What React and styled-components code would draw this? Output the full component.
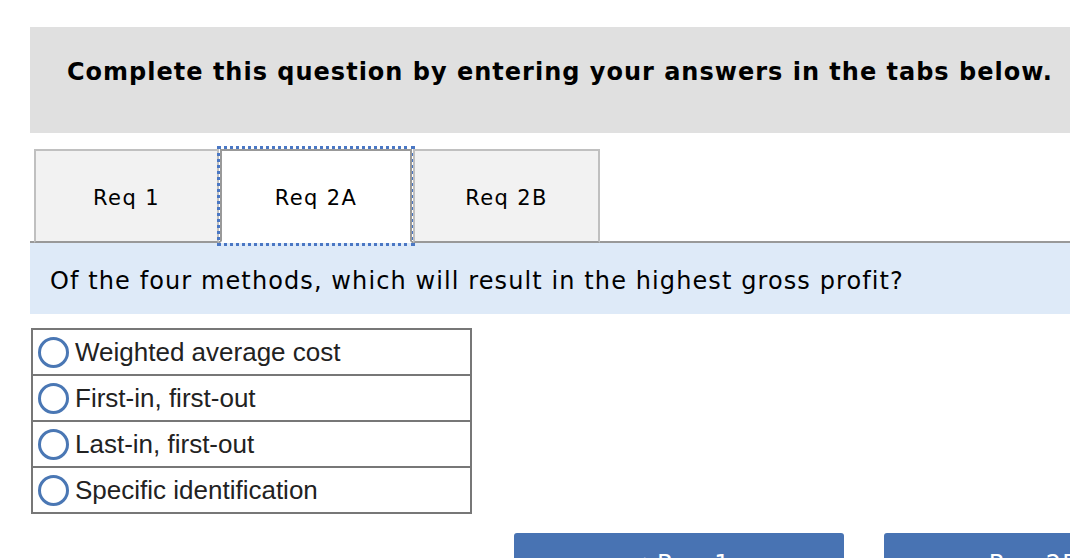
import React, { useState } from 'react';
import styled, { createGlobalStyle } from 'styled-components';

const tabs = ['Req 1', 'Req 2A', 'Req 2B'];
const options = [
  'Weighted average cost',
  'First-in, first-out',
  'Last-in, first-out',
  'Specific identification',
];

const GlobalStyle = createGlobalStyle`
  body { margin: 0; background: #fff; overflow: hidden; }
  * { box-sizing: border-box; }
`;

const Page = styled.div`
  padding: 27px 0 0 30px;
  width: 1070px;
  height: 558px;
  overflow: hidden;
  font-family: "DejaVu Sans", Verdana, sans-serif;
  color: #000;
`;

const Banner = styled.div`
  display: flex;
  align-items: center;
  height: 106px;
  padding: 0 0 16px 37px;
  background: #e0e0e0;
  font-size: 24px;
  font-weight: bold;
  letter-spacing: 1px;
  white-space: nowrap;
`;

const TabBar = styled.div`
  display: flex;
  align-items: flex-end;
  margin-top: 16px;
  padding-left: 4px;
  border-bottom: 2px solid #999;
`;

const Tab = styled.button`
  display: flex;
  align-items: center;
  justify-content: center;
  width: ${p => p.$w}px;
  height: 94px;
  margin: 0 ${p => (p.$active ? '1px' : '0')};
  margin-bottom: -2px;
  padding: 4px 0 0;
  border: 2px solid ${p => (p.$active ? '#999' : '#c0c0c0')};
  border-bottom: ${p => (p.$active ? '2px solid #fff' : '2px solid #999')};
  background: ${p => (p.$active ? '#fff' : '#f2f2f2')};
  outline: ${p => (p.$active ? '3px dotted #4a77c4' : 'none')};
  outline-offset: 0;
  font-family: inherit;
  font-size: 21px;
  letter-spacing: 1.4px;
  color: #000;
  cursor: pointer;
`;

const Question = styled.div`
  display: flex;
  align-items: center;
  height: 71px;
  padding: 5px 0 0 20px;
  background: #deeaf8;
  font-size: 24px;
  letter-spacing: 1.1px;
  white-space: nowrap;
`;

const Options = styled.div`
  display: flex;
  flex-direction: column;
  width: 441px;
  margin: 14px 0 0 1px;
  border: 2px solid #777;
`;

const Option = styled.label`
  display: flex;
  align-items: center;
  gap: 6px;
  box-sizing: content-box;
  height: 44px;
  padding-left: 5px;
  border-top: ${p => (p.$first ? 'none' : '2px solid #777')};
  font-family: "Liberation Sans", Arial, sans-serif;
  font-size: 26px;
  color: #222;
  cursor: pointer;
`;

const Radio = styled.span`
  flex: none;
  width: 31px;
  height: 31px;
  border-radius: 50%;
  border: 3px solid ${p => (p.$checked ? '#2c5aa0' : '#4a77b4')};
  background: ${p => (p.$checked ? 'radial-gradient(circle, #4a77b4 0 45%, #fff 50%)' : '#fff')};
`;

const Nav = styled.div`
  display: flex;
  gap: 40px;
  margin: 19px 0 0 484px;
`;

const NavButton = styled.button`
  flex: none;
  width: 330px;
  height: 50px;
  padding: 12px 0 0;
  border: none;
  border-radius: 3px;
  background: #4873b3;
  color: #fff;
  font-family: "DejaVu Sans", Verdana, sans-serif;
  font-size: 24px;
  letter-spacing: 1px;
  text-align: center;
`;

const widths = [185, 192, 187];

export default function App() {
  const [active, setActive] = useState(1);
  const [picked, setPicked] = useState(null);

  return (
    <Page>
      <GlobalStyle />
      <Banner>Complete this question by entering your answers in the tabs below.</Banner>
      <TabBar>
        {tabs.map((t, i) => (
          <Tab key={t} $w={widths[i]} $active={i === active} onClick={() => setActive(i)}>
            {t}
          </Tab>
        ))}
      </TabBar>
      <Question>Of the four methods, which will result in the highest gross profit?</Question>
      <Options>
        {options.map((o, i) => (
          <Option key={o} $first={i === 0} onClick={() => setPicked(i)}>
            <Radio $checked={picked === i} />
            {o}
          </Option>
        ))}
      </Options>
      <Nav>
        <NavButton>&lt; Req 1</NavButton>
        <NavButton>Req 2B &gt;</NavButton>
      </Nav>
    </Page>
  );
}
